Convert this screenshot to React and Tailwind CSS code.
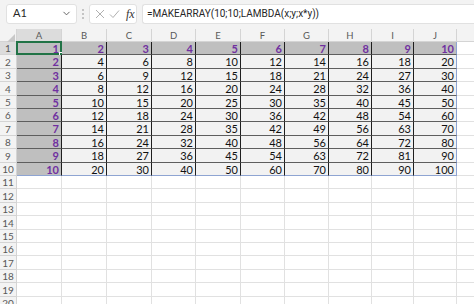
import { ChevronDown } from 'lucide-react'

const COLS =
  'grid grid-cols-[17px_45px_45px_45px_44px_45px_44px_44px_43px_42px_43px_1fr]'

const LETTERS = ['A', 'B', 'C', 'D', 'E', 'F', 'G', 'H', 'I', 'J']

// row heights approximate a 13.4px pitch
const ROW_HEIGHTS = [13, 14, 13, 14, 13, 13, 14, 13, 14, 13, 13, 14, 13, 14, 13, 13, 14, 13, 14, 13]
const H = { 13: 'h-[13px]', 14: 'h-[14px]' }

const FormulaBar = () => (
  <div className="flex h-[29px] items-center bg-[#f3f3f3] pl-[6px] pb-[3px] pt-[1px]">
    <div className="flex h-[20px] w-[71px] items-center justify-between rounded-[3px] border border-[#e1e1e1] bg-white pl-[6px] pr-[4px] text-[11px] text-[#262626]">
      <span>A1</span>
      <ChevronDown className="h-[11px] w-[11px] text-[#595959]" strokeWidth={2} />
    </div>
    <div className="flex w-[12px] flex-col items-center gap-[2px]">
      <span className="h-[2px] w-[2px] rounded-full bg-[#b5b5b5]" />
      <span className="h-[2px] w-[2px] rounded-full bg-[#b5b5b5]" />
      <span className="h-[2px] w-[2px] rounded-full bg-[#b5b5b5]" />
    </div>
    <div className="flex h-[20px] w-[48px] items-center gap-[4px] rounded-[3px] border border-[#e1e1e1] bg-white pl-[5px]">
      <svg width="10" height="10" viewBox="0 0 10 10" className="text-[#b0b0b0]">
        <path d="M1 1 L9 9 M9 1 L1 9" stroke="currentColor" strokeWidth="1" fill="none" />
      </svg>
      <svg width="11" height="10" viewBox="0 0 11 10" className="text-[#b0b0b0]">
        <path d="M1 5.5 L4 8.5 L10 1.5" stroke="currentColor" strokeWidth="1" fill="none" />
      </svg>
      <span className="ml-[2px] font-['Liberation_Serif'] text-[12px] italic text-[#333]">fx</span>
    </div>
    <div className="ml-[5px] flex h-[20px] flex-1 items-center rounded-l-[3px] border border-r-0 border-[#e1e1e1] bg-white pl-[4px] font-['Roboto'] text-[10px] text-[#262626]">
      =MAKEARRAY(10;10;LAMBDA(x;y;x*y))
    </div>
  </div>
)

const HeaderRow = () => (
  <div className={`${COLS} h-[13px] border-b border-[#d4d4d4] bg-[#f3f3f3] text-[9.5px] text-[#595959]`}>
    <div className="relative border-r border-[#d4d4d4]">
      <span className="absolute bottom-[1px] right-[1px] h-0 w-0 border-b-[8px] border-l-[8px] border-b-[#c8c8c8] border-l-transparent" />
    </div>
    {LETTERS.map((l, i) => (
      <div
        key={l}
        className={`flex items-center justify-center border-r border-[#d4d4d4] ${
          i === 0 ? 'bg-[#dcdcdc]' : ''
        }`}
      >
        {l}
      </div>
    ))}
    <div />
  </div>
)

const Cell = ({ r, c }) => {
  if (r > 10) {
    return <div className="border-r border-b border-[#e1e1e1]" />
  }
  const head = r === 1 || c === 1
  const right = c === 10 ? 'border-r border-r-[#8ea4d2]' : 'border-r-[1.5px] border-r-[#1f1f1f]'
  const bottom = r === 10 ? 'border-b-[#8ea4d2]' : 'border-b-[#5e5e5e]'
  return (
    <div
      className={`relative flex items-center justify-end border-b pr-[2px] ${right} ${bottom} ${
        head ? 'bg-[#bfbfbf] font-bold text-[#7030a0]' : 'bg-[#f2f2f2] text-[#111]'
      }`}
    >
      {r * c}
      {r === 1 && c === 1 && (
        <>
          <span className="absolute -top-px -left-px -right-px -bottom-px border-2 border-[#217346]" />
          <span className="absolute -bottom-[3px] -right-[3px] h-[5px] w-[5px] border border-white bg-[#217346]" />
        </>
      )}
    </div>
  )
}

const App = () => {
  return (
    <div className="h-[304px] w-[474px] overflow-hidden bg-white font-['Lato']">
      <FormulaBar />
      <HeaderRow />
      {ROW_HEIGHTS.map((h, idx) => {
        const r = idx + 1
        return (
          <div key={r} className={`${COLS} ${H[h]} text-[11px] leading-none`}>
            <div
              className={`flex items-center justify-center border-r border-b border-[#d4d4d4] text-[10px] text-[#595959] ${
                r === 1 ? 'bg-[#dcdcdc]' : 'bg-[#f3f3f3]'
              }`}
            >
              {r}
            </div>
            {LETTERS.map((l, i) => (
              <Cell key={l} r={r} c={i + 1} />
            ))}
            <div className="border-b border-[#e1e1e1]" />
          </div>
        )
      })}
    </div>
  )
}

export default App
